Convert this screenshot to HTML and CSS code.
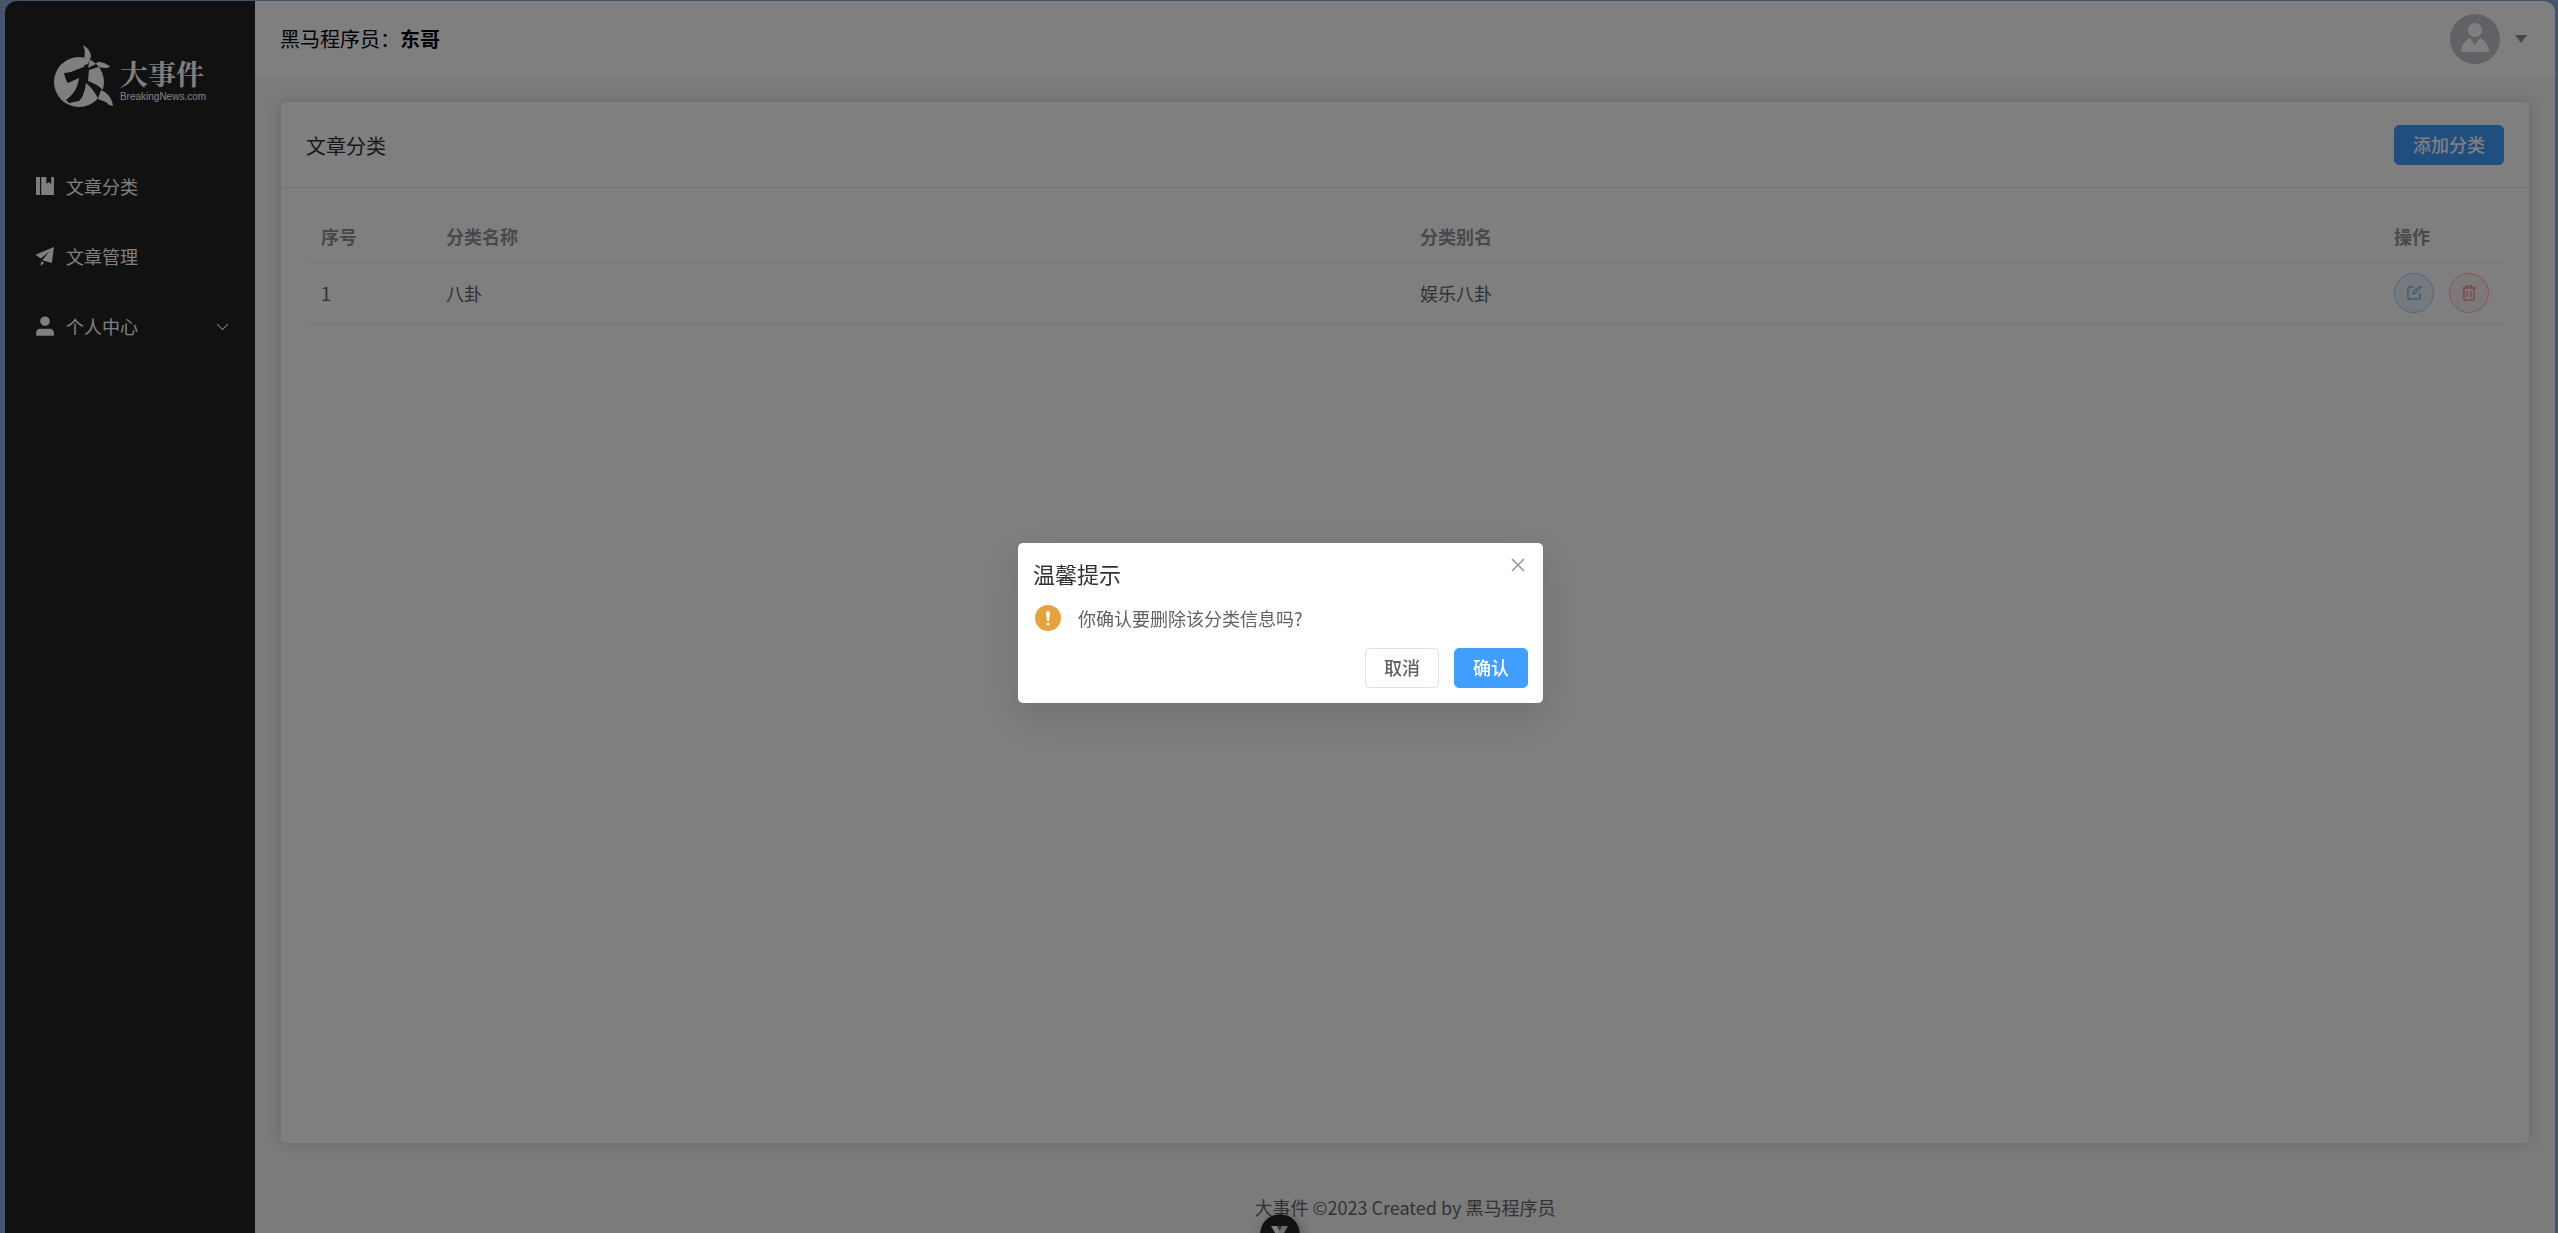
FILE: index.html
```html
<!DOCTYPE html>
<html lang="zh-CN">
<head>
  <meta charset="UTF-8" />
  <meta name="viewport" content="width=device-width, initial-scale=1.0" />
  <title>大事件</title>
  <link rel="stylesheet" href="styles.css">
</head>
<body>
  <div class="layout">
    <aside class="aside">
      <div class="logo">
        <svg class="logo-mark" viewBox="0 0 60 64" aria-hidden="true">
          <circle cx="25" cy="38" r="25" fill="#fff" />
          <path d="M30 15L36 15L34 24L46 18L47 22L35 26L34 37C40 39 45 42 49 46L44 54C40 47 36 42 32 39C31 47 29 53 25 57L15 59L12 56C20 50 24 43 25 34L14 39C12 37 11 33 10 29C17 29 23 25 30 23Z" fill="#232323" />
          <path d="M29 1C34 4 37 8 37 13L34 20L28 22C31 14 32 8 29 1Z" fill="#fff" />
          <path d="M42 20C43 17 46 18 50 19L56 22C54 25 49 24 45 23Z" fill="#fff" />
          <path d="M47 46C53 49 58 53 59 62L55 61C52 57 48 57 44 55Z" fill="#fff" />
        </svg>
        <div class="logo-text">
          <span class="logo-name">大事件</span>
          <span class="logo-site">BreakingNews.com</span>
        </div>
      </div>
      <nav class="menu">
        <a class="menu-item" href="#channel">
          <svg class="menu-icon" viewBox="0 0 1024 1024"><path d="M96 96h180v832H96zM336 96v832h592V96H800v320l-112-96-112 96V96z" /></svg>
          <span>文章分类</span>
        </a>
        <a class="menu-item" href="#manage">
          <svg class="menu-icon" viewBox="0 0 1024 1024"><path d="m64 448 864-352-96 736-446-128 333-396-399 316zm256 320 160 48-160 160z" /></svg>
          <span>文章管理</span>
        </a>
        <a class="menu-item" href="#user">
          <svg class="menu-icon" viewBox="0 0 1024 1024"><path d="M288 288a224 224 0 1 0 448 0 224 224 0 1 0-448 0m608 672H128a32 32 0 0 1-32-32v-96a192 192 0 0 1 192-192h448a192 192 0 0 1 192 192v96a32 32 0 0 1-32 32z" /></svg>
          <span>个人中心</span>
          <svg class="menu-arrow" viewBox="0 0 1024 1024"><path d="m150 350 362 370 362-370" /></svg>
        </a>
      </nav>
    </aside>

    <div class="container">
      <header class="header">
        <div>黑马程序员：<strong>东哥</strong></div>
        <button class="user" type="button" aria-label="用户菜单">
          <svg class="avatar" viewBox="0 0 50 50">
            <circle cx="25" cy="25" r="25" fill="#c0c4cc" />
            <circle cx="25" cy="16" r="7" fill="#fff" />
            <path d="M11 38c0-7 4-12 9-14l5 7 5-7c5 2 9 7 9 14z" fill="#fff" />
          </svg>
          <svg class="caret" viewBox="0 0 18 18"><path d="M3 5h12l-6 8z" /></svg>
        </button>
      </header>

      <main class="main">
        <section class="card">
          <div class="card-header">
            <span>文章分类</span>
            <button class="btn btn-primary" type="button">添加分类</button>
          </div>
          <div class="card-body">
            <table class="table">
              <colgroup>
                <col class="col-small">
                <col>
                <col>
                <col class="col-small">
              </colgroup>
              <thead>
                <tr>
                  <th>序号</th>
                  <th>分类名称</th>
                  <th>分类别名</th>
                  <th>操作</th>
                </tr>
              </thead>
              <tbody>
                <tr>
                  <td>1</td>
                  <td>八卦</td>
                  <td>娱乐八卦</td>
                  <td>
                    <div class="actions">
                      <button class="circle circle-edit" type="button" aria-label="编辑">
                        <svg viewBox="0 0 18 18"><path d="M9 3H3v12h12V9M8 10l1-3 6-5 1 1-5 6z" /></svg>
                      </button>
                      <button class="circle circle-delete" type="button" aria-label="删除">
                        <svg viewBox="0 0 18 18"><path d="M2 4h14M6 4V2h6v2M4 4v12h10V4M7 7v6M11 7v6" /></svg>
                      </button>
                    </div>
                  </td>
                </tr>
              </tbody>
            </table>
          </div>
        </section>
      </main>

      <footer class="footer">大事件 ©2023 Created by 黑马程序员</footer>
    </div>
  </div>

  <svg class="float-badge" viewBox="0 0 40 40" aria-hidden="true">
    <circle cx="20" cy="20" r="20" fill="#242424" />
    <path d="M11 12h6l4 7-3 5z" fill="#fff" />
    <path d="M17 12h5l-2 4z" fill="#777" />
    <path d="M22 12h6l-9 16h-5z" fill="#ddd" />
  </svg>

  <div class="overlay">
    <div class="message-box" role="dialog" aria-modal="true" aria-labelledby="box-title">
      <button class="close" type="button" aria-label="关闭">
        <svg viewBox="0 0 20 20"><path d="M4 4l12 12M16 4L4 16" /></svg>
      </button>
      <h2 class="message-title" id="box-title">温馨提示</h2>
      <div class="message-content">
        <svg class="warning" viewBox="0 0 26 26" aria-hidden="true">
          <circle cx="13" cy="13" r="13" fill="#e6a23c" />
          <path d="M13 6a2 2 0 0 1 2 2l-1 8h-2l-1-8a2 2 0 0 1 2-2z" fill="#fff" />
          <circle cx="13" cy="19" r="1.5" fill="#fff" />
        </svg>
        <p>你确认要删除该分类信息吗?</p>
      </div>
      <div class="message-btns">
        <button class="btn" type="button">取消</button>
        <button class="btn btn-primary" type="button">确认</button>
      </div>
    </div>
  </div>
</body>
</html>
```
FILE: styles.css
```css
:root {
  --primary: #409eff;
  --danger: #f56c6c;
  --text: #303133;
  --text-regular: #606266;
  --text-light: #909399;
  --border: #dcdfe6;
}

* {
  box-sizing: border-box;
  margin: 0;
  padding: 0;
}

body {
  font-family: "Noto Sans CJK SC", sans-serif;
  font-size: 18px;
  background: #88aad6;
  height: 100vh;
  overflow: hidden;
}

button {
  font-family: inherit;
  font-size: inherit;
  cursor: pointer;
}

.layout {
  display: flex;
  height: calc(100vh + 10px);
  margin: 1px 3px 0 5px;
  border-radius: 12px 12px 0 0;
  overflow: hidden;
}

/* sidebar */
.aside {
  width: 250px;
  flex-shrink: 0;
  background: #232323;
}

.logo {
  height: 150px;
  display: flex;
  justify-content: center;
  align-items: center;
  gap: 6px;
  color: #fff;
}

.logo-mark {
  width: 60px;
  height: 64px;
}

.logo-text {
  display: flex;
  flex-direction: column;
  gap: 2px;
  padding-top: 8px;
}

.logo-name {
  font-family: "Noto Serif CJK SC", "Noto Sans CJK SC", serif;
  font-size: 28px;
  font-weight: bold;
  line-height: 32px;
}

.logo-site {
  font-family: "Liberation Sans", sans-serif;
  font-size: 10px;
  line-height: 12px;
  text-align: center;
}

.menu-item {
  height: 70px;
  padding: 0 25px 0 29px;
  display: flex;
  align-items: center;
  gap: 10px;
  color: #fff;
  text-decoration: none;
}

.menu-icon {
  width: 22px;
  height: 22px;
  fill: #fff;
}

.menu-arrow {
  width: 15px;
  height: 15px;
  margin-left: auto;
  fill: none;
  stroke: #fff;
  stroke-width: 70;
}

/* right side */
.container {
  flex: 1;
  display: flex;
  flex-direction: column;
  background: #f6f6f6;
}

.header {
  height: 75px;
  padding: 0 25px;
  display: flex;
  justify-content: space-between;
  align-items: center;
  background: #fff;
  font-size: 20px;
}

.user {
  display: flex;
  align-items: center;
  gap: 12px;
  border: none;
  background: none;
}

.avatar {
  width: 50px;
  height: 50px;
}

.caret {
  width: 18px;
  height: 18px;
  fill: #909090;
}

.main {
  flex: 1;
  display: flex;
  padding: 25px;
}

.card {
  flex: 1;
  border: 1px solid #e4e7ed;
  border-radius: 5px;
  background: #fff;
  box-shadow: 0 0 15px rgba(0, 0, 0, 0.12);
}

.card-header {
  display: flex;
  justify-content: space-between;
  align-items: center;
  padding: 23px 25px 22px;
  border-bottom: 1px solid #e4e7ed;
  color: var(--text);
  font-size: 20px;
}

.card-body {
  padding: 25px;
}

.btn {
  height: 40px;
  padding: 0 18px 3px;
  border: 1px solid var(--border);
  border-radius: 5px;
  background: #fff;
  color: var(--text-regular);
  font-size: 18px;
  font-weight: 500;
  line-height: 1;
}

.btn-primary {
  border-color: var(--primary);
  background: var(--primary);
  color: #fff;
}

.table {
  width: 100%;
  table-layout: fixed;
  border-collapse: separate;
  border-spacing: 0;
  color: var(--text-regular);
}

.col-small {
  width: 125px;
}

.table th,
.table td {
  padding: 10px 15px;
  border-bottom: 1px solid #ebeef5;
  text-align: left;
  line-height: 29px;
}

.table th {
  padding: 9px 15px 11px;
  color: var(--text-light);
}

.actions {
  display: flex;
  gap: 15px;
}

.circle {
  flex-shrink: 0;
  width: 40px;
  height: 40px;
  display: flex;
  justify-content: center;
  align-items: center;
  border: 1px solid;
  border-radius: 50%;
}

.circle svg {
  width: 18px;
  height: 18px;
  fill: none;
  stroke: currentColor;
}

.circle-edit {
  color: var(--primary);
  background: #ecf5ff;
  border-color: #a0cfff;
}

.circle-delete {
  color: var(--danger);
  background: #fef0f0;
  border-color: #fab6b6;
}

.footer {
  height: 75px;
  display: flex;
  justify-content: center;
  align-items: center;
  color: #666;
}

.float-badge {
  position: fixed;
  left: calc(50% - 19px);
  bottom: -21px;
  width: 40px;
  height: 40px;
  border-radius: 50%;
  box-shadow: 2px 2px 12px rgba(0, 0, 0, 0.3);
}

/* message box */
.overlay {
  position: fixed;
  inset: 0;
  display: flex;
  justify-content: center;
  align-items: center;
  padding: 13px 0 0 3px;
  background: rgba(0, 0, 0, 0.5);
}

.message-box {
  position: relative;
  width: 525px;
  padding: 15px;
  border-radius: 5px;
  background: #fff;
  box-shadow: 0 15px 40px 5px rgba(0, 0, 0, 0.1);
}

.close {
  position: absolute;
  top: 12px;
  right: 15px;
  width: 20px;
  height: 20px;
  border: none;
  background: none;
}

.close svg {
  display: block;
  fill: none;
  stroke: var(--text-light);
  stroke-width: 1.5;
}

.message-title {
  color: var(--text);
  font-size: 22px;
  font-weight: normal;
  line-height: 30px;
}

.message-content {
  display: flex;
  align-items: center;
  gap: 17px;
  padding: 16px 2px;
  color: var(--text-regular);
  line-height: 28px;
}

.warning {
  width: 26px;
  height: 26px;
}

.message-btns {
  display: flex;
  justify-content: flex-end;
  gap: 15px;
}
```
